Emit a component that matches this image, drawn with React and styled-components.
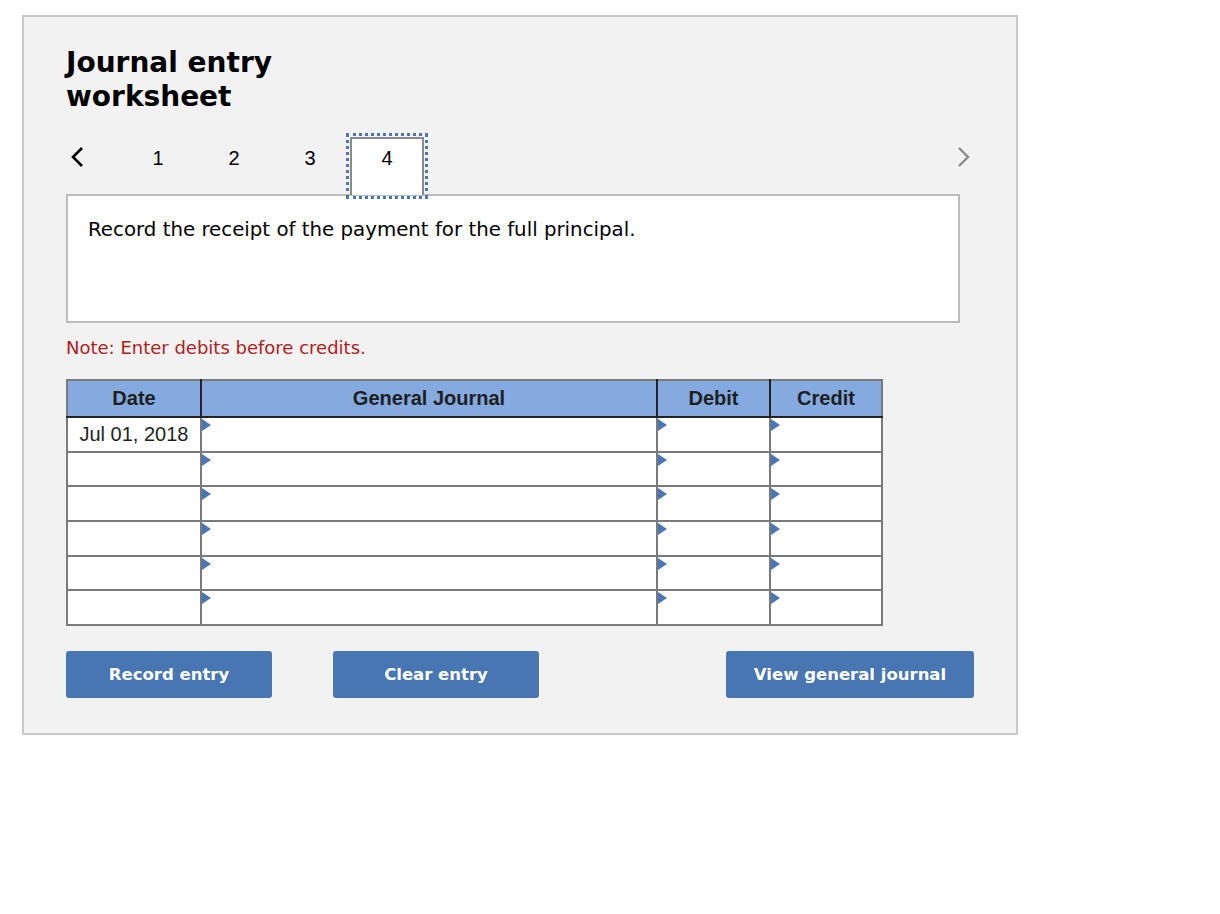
import React from "react";
import styled, { createGlobalStyle } from "styled-components";

const GlobalStyle = createGlobalStyle`
  html, body {
    margin: 0;
    background: #ffffff;
  }
  body {
    font-family: "DejaVu Sans", Verdana, sans-serif;
    color: #000;
  }
`;

const Page = styled.div`
  padding: 15px 0 0 22px;
`;

const Panel = styled.div`
  width: 996px;
  height: 720px;
  border: 2px solid #c8c8c8;
  background: #f2f2f2;
  padding: 0 42px;
  box-sizing: border-box;
  display: flex;
  flex-direction: column;
`;

const Title = styled.h1`
  margin: 29px 0 0 0;
  font-family: "DejaVu Sans", Verdana, sans-serif;
  font-weight: bold;
  font-size: 28px;
  line-height: 34px;
  width: 260px;
`;

const NavRow = styled.div`
  display: flex;
  align-items: stretch;
  height: 57px;
  margin-top: 23px;
  width: 904px;
  font-family: "Liberation Sans", Arial, sans-serif;
`;

const Arrow = styled.div`
  width: 54px;
  display: flex;
  align-items: flex-start;
  padding: 9px 0 0 4px;
  box-sizing: border-box;
  margin-left: ${({ $right }) => ($right ? "auto" : "0")};
  justify-content: ${({ $right }) => ($right ? "flex-end" : "flex-start")};
  svg { display: block; }
`;

const Tab = styled.div`
  width: 76px;
  display: flex;
  align-items: flex-start;
  justify-content: center;
  padding-top: 10px;
  font-size: 20px;
  line-height: 22px;
  box-sizing: border-box;
  position: relative;
  ${({ $active }) =>
    $active &&
    `
    background: #fff;
    border: 2px solid #8a8a8a;
    border-bottom: none;
    outline: 3px dotted #4a76b4;
    outline-offset: 1px;
    width: 74px;
    height: 58px;
    margin-left: 2px;
    padding-top: 8px;
    z-index: 1;
  `}
`;

const Question = styled.div`
  width: 894px;
  height: 129px;
  box-sizing: border-box;
  border: 2px solid #bcbcbc;
  background: #fff;
  padding: 23px 20px;
  font-size: 19.8px;
  line-height: 22px;
`;

const Note = styled.p`
  margin: 14px 0 0 0;
  color: #ae2121;
  font-size: 18px;
  line-height: 22px;
`;

const Table = styled.table`
  margin: 20px 0 0 0;
  border-collapse: collapse;
  width: 815px;
  table-layout: fixed;
  font-family: "Liberation Sans", Arial, sans-serif;
  border: 2px solid #7a7a7a;
  background: #fff;
`;

const Th = styled.th`
  background: #84aadf;
  height: 35px;
  padding: 0;
  font-size: 20px;
  font-weight: bold;
  color: #1f1f1f;
  border: 2px solid #222;
  border-top-color: #7a7a7a;
  width: ${({ $w }) => $w}px;
  &:first-child { border-left-color: #7a7a7a; }
  &:last-child { border-right-color: #7a7a7a; }
`;

const Td = styled.td`
  height: 32.7px;
  padding: 0;
  border: 2px solid #7a7a7a;
  font-size: 20px;
  color: #1f1f1f;
  text-align: center;
  vertical-align: middle;
  position: relative;
`;

const Marker = styled.span`
  position: absolute;
  left: 0;
  top: 1px;
  width: 0;
  height: 0;
  border-top: 6px solid transparent;
  border-bottom: 6px solid transparent;
  border-left: 9px solid #4a76b4;
`;

const Buttons = styled.div`
  display: flex;
  margin: 25px 0 0 0;
  width: 908px;
`;

const Button = styled.button`
  width: ${({ $w }) => $w}px;
  height: 47px;
  margin-right: ${({ $gap }) => $gap || 0}px;
  margin-left: ${({ $auto }) => ($auto ? "auto" : "0")};
  border: none;
  border-radius: 3px;
  background: #4876b3;
  color: #fff;
  font-family: "DejaVu Sans", Verdana, sans-serif;
  font-weight: bold;
  font-size: 16.5px;
  cursor: pointer;
`;

const rows = ["Jul 01, 2018", "", "", "", "", ""];

export default function App() {
  return (
    <>
      <GlobalStyle />
      <Page>
        <Panel>
          <Title>Journal entry worksheet</Title>
          <NavRow>
            <Arrow>
              <svg width="14" height="22" viewBox="0 0 14 22">
                <path d="M12 2 L3 11 L12 20" fill="none" stroke="#000" strokeWidth="2.6" />
              </svg>
            </Arrow>
            <Tab>1</Tab>
            <Tab>2</Tab>
            <Tab>3</Tab>
            <Tab $active>4</Tab>
            <Arrow $right>
              <svg width="14" height="22" viewBox="0 0 14 22">
                <path d="M3 2 L12 11 L3 20" fill="none" stroke="#8a8a8a" strokeWidth="2.4" />
              </svg>
            </Arrow>
          </NavRow>
          <Question>Record the receipt of the payment for the full principal.</Question>
          <Note>Note: Enter debits before credits.</Note>
          <Table>
            <thead>
              <tr>
                <Th $w={132}>Date</Th>
                <Th $w={454}>General Journal</Th>
                <Th $w={111}>Debit</Th>
                <Th $w={110}>Credit</Th>
              </tr>
            </thead>
            <tbody>
              {rows.map((d, i) => (
                <tr key={i}>
                  <Td>{d}</Td>
                  <Td><Marker /></Td>
                  <Td><Marker /></Td>
                  <Td><Marker /></Td>
                </tr>
              ))}
            </tbody>
          </Table>
          <Buttons>
            <Button $w={206} $gap={61}>Record entry</Button>
            <Button $w={206}>Clear entry</Button>
            <Button $w={248} $auto>View general journal</Button>
          </Buttons>
        </Panel>
      </Page>
    </>
  );
}
